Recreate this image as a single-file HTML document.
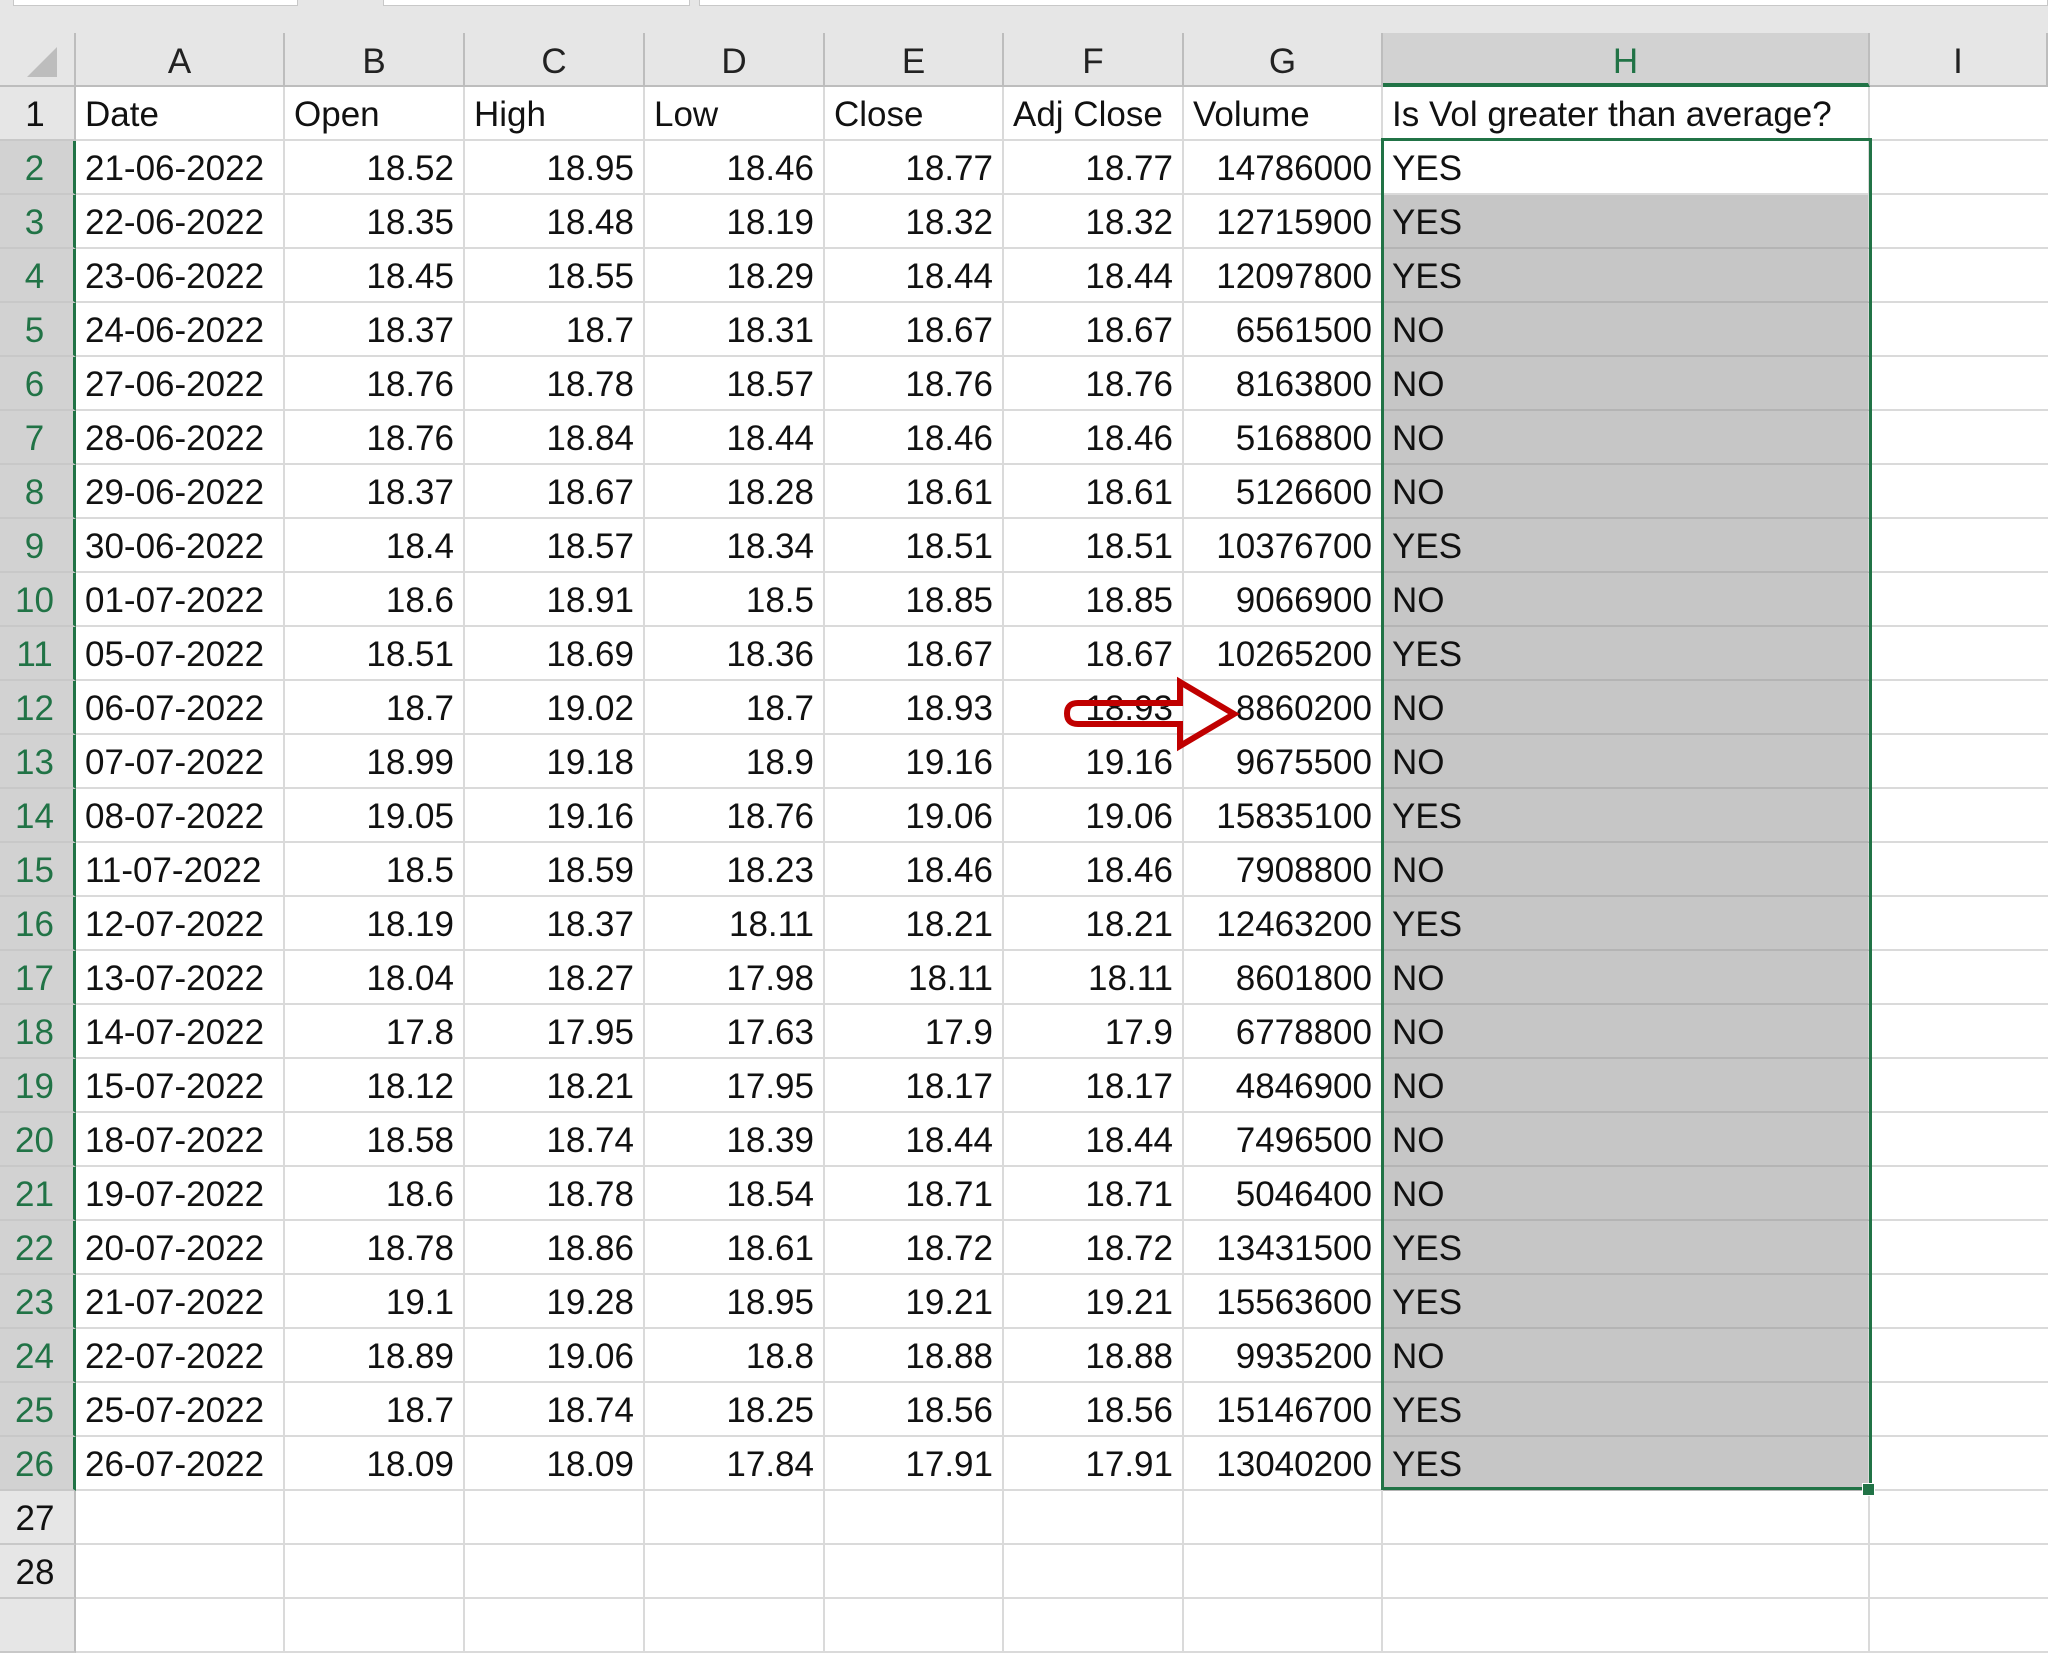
<!DOCTYPE html>
<html><head><meta charset="utf-8"><style>
*{margin:0;padding:0;box-sizing:border-box}
body{width:2048px;height:1609px;overflow:hidden;background:#fff;font-family:"Liberation Sans",Arial,sans-serif;font-size:35px;color:#111;position:relative}
.top{position:absolute;left:0;top:0;width:2048px;height:33px;background:#e6e6e6}
.box{position:absolute;top:0;height:6px;background:#fff;border:1px solid #c8c8c8;border-top:none}
.row{position:absolute;left:0;width:2048px;height:54px;display:flex}
.c{height:54px;border-right:2px solid #dadada;border-bottom:2px solid #dadada;line-height:56px;white-space:nowrap;overflow:hidden}
.h{width:76px;background:#e6e6e6;text-align:center;border-right:2px solid #bdbdbd;border-bottom:2px solid #c8c8c8;padding-right:4px}
.s{background:#d2d2d2;color:#217346;border-right:3px solid #217346}
.w1{width:209px}.w2{width:180px}.w3{width:180px}.w4{width:180px}.w5{width:179px}.w6{width:180px}.w7{width:199px}.w8{width:487px}.w9{width:178px;border-right:none}
.l{padding-left:9px}.r{text-align:right;padding-right:9px}
.g{background:#c6c6c6;border-bottom-color:#b4b4b4}
.ch .c{background:#e6e6e6;text-align:center;border-right:2px solid #bdbdbd;border-bottom:2px solid #bdbdbd;color:#222;line-height:58px}
.ch .h{border-right:2px solid #bdbdbd}
.ch .hs{background:#d2d2d2;color:#217346;border-bottom:4px solid #217346}
</style></head><body>
<div class="top">
<div class="box" style="left:13px;width:285px"></div>
<div class="box" style="left:383px;width:307px"></div>
<div class="box" style="left:699px;width:1349px"></div>
</div>
<div class="row ch" style="top:33px">
<div class="c h"><svg width="40" height="40" style="position:relative;top:10px;left:6px"><polygon points="36,4 36,34 6,34" fill="#bdbdbd"/></svg></div>
<div class="c w1">A</div><div class="c w2">B</div><div class="c w3">C</div><div class="c w4">D</div><div class="c w5">E</div><div class="c w6">F</div><div class="c w7">G</div><div class="c w8 hs">H</div><div class="c w9">I</div>
</div>
<div class="row" style="top:87px"><div class="c h">1</div><div class="c w1 l">Date</div><div class="c w2 l">Open</div><div class="c w3 l">High</div><div class="c w4 l">Low</div><div class="c w5 l">Close</div><div class="c w6 l">Adj Close</div><div class="c w7 l">Volume</div><div class="c w8 l">Is Vol greater than average?</div><div class="c w9"></div></div>
<div class="row" style="top:141px"><div class="c h s">2</div><div class="c w1 l">21-06-2022</div><div class="c w2 r">18.52</div><div class="c w3 r">18.95</div><div class="c w4 r">18.46</div><div class="c w5 r">18.77</div><div class="c w6 r">18.77</div><div class="c w7 r">14786000</div><div class="c w8 l">YES</div><div class="c w9"></div></div>
<div class="row" style="top:195px"><div class="c h s">3</div><div class="c w1 l">22-06-2022</div><div class="c w2 r">18.35</div><div class="c w3 r">18.48</div><div class="c w4 r">18.19</div><div class="c w5 r">18.32</div><div class="c w6 r">18.32</div><div class="c w7 r">12715900</div><div class="c w8 l g">YES</div><div class="c w9"></div></div>
<div class="row" style="top:249px"><div class="c h s">4</div><div class="c w1 l">23-06-2022</div><div class="c w2 r">18.45</div><div class="c w3 r">18.55</div><div class="c w4 r">18.29</div><div class="c w5 r">18.44</div><div class="c w6 r">18.44</div><div class="c w7 r">12097800</div><div class="c w8 l g">YES</div><div class="c w9"></div></div>
<div class="row" style="top:303px"><div class="c h s">5</div><div class="c w1 l">24-06-2022</div><div class="c w2 r">18.37</div><div class="c w3 r">18.7</div><div class="c w4 r">18.31</div><div class="c w5 r">18.67</div><div class="c w6 r">18.67</div><div class="c w7 r">6561500</div><div class="c w8 l g">NO</div><div class="c w9"></div></div>
<div class="row" style="top:357px"><div class="c h s">6</div><div class="c w1 l">27-06-2022</div><div class="c w2 r">18.76</div><div class="c w3 r">18.78</div><div class="c w4 r">18.57</div><div class="c w5 r">18.76</div><div class="c w6 r">18.76</div><div class="c w7 r">8163800</div><div class="c w8 l g">NO</div><div class="c w9"></div></div>
<div class="row" style="top:411px"><div class="c h s">7</div><div class="c w1 l">28-06-2022</div><div class="c w2 r">18.76</div><div class="c w3 r">18.84</div><div class="c w4 r">18.44</div><div class="c w5 r">18.46</div><div class="c w6 r">18.46</div><div class="c w7 r">5168800</div><div class="c w8 l g">NO</div><div class="c w9"></div></div>
<div class="row" style="top:465px"><div class="c h s">8</div><div class="c w1 l">29-06-2022</div><div class="c w2 r">18.37</div><div class="c w3 r">18.67</div><div class="c w4 r">18.28</div><div class="c w5 r">18.61</div><div class="c w6 r">18.61</div><div class="c w7 r">5126600</div><div class="c w8 l g">NO</div><div class="c w9"></div></div>
<div class="row" style="top:519px"><div class="c h s">9</div><div class="c w1 l">30-06-2022</div><div class="c w2 r">18.4</div><div class="c w3 r">18.57</div><div class="c w4 r">18.34</div><div class="c w5 r">18.51</div><div class="c w6 r">18.51</div><div class="c w7 r">10376700</div><div class="c w8 l g">YES</div><div class="c w9"></div></div>
<div class="row" style="top:573px"><div class="c h s">10</div><div class="c w1 l">01-07-2022</div><div class="c w2 r">18.6</div><div class="c w3 r">18.91</div><div class="c w4 r">18.5</div><div class="c w5 r">18.85</div><div class="c w6 r">18.85</div><div class="c w7 r">9066900</div><div class="c w8 l g">NO</div><div class="c w9"></div></div>
<div class="row" style="top:627px"><div class="c h s">11</div><div class="c w1 l">05-07-2022</div><div class="c w2 r">18.51</div><div class="c w3 r">18.69</div><div class="c w4 r">18.36</div><div class="c w5 r">18.67</div><div class="c w6 r">18.67</div><div class="c w7 r">10265200</div><div class="c w8 l g">YES</div><div class="c w9"></div></div>
<div class="row" style="top:681px"><div class="c h s">12</div><div class="c w1 l">06-07-2022</div><div class="c w2 r">18.7</div><div class="c w3 r">19.02</div><div class="c w4 r">18.7</div><div class="c w5 r">18.93</div><div class="c w6 r">18.93</div><div class="c w7 r">8860200</div><div class="c w8 l g">NO</div><div class="c w9"></div></div>
<div class="row" style="top:735px"><div class="c h s">13</div><div class="c w1 l">07-07-2022</div><div class="c w2 r">18.99</div><div class="c w3 r">19.18</div><div class="c w4 r">18.9</div><div class="c w5 r">19.16</div><div class="c w6 r">19.16</div><div class="c w7 r">9675500</div><div class="c w8 l g">NO</div><div class="c w9"></div></div>
<div class="row" style="top:789px"><div class="c h s">14</div><div class="c w1 l">08-07-2022</div><div class="c w2 r">19.05</div><div class="c w3 r">19.16</div><div class="c w4 r">18.76</div><div class="c w5 r">19.06</div><div class="c w6 r">19.06</div><div class="c w7 r">15835100</div><div class="c w8 l g">YES</div><div class="c w9"></div></div>
<div class="row" style="top:843px"><div class="c h s">15</div><div class="c w1 l">11-07-2022</div><div class="c w2 r">18.5</div><div class="c w3 r">18.59</div><div class="c w4 r">18.23</div><div class="c w5 r">18.46</div><div class="c w6 r">18.46</div><div class="c w7 r">7908800</div><div class="c w8 l g">NO</div><div class="c w9"></div></div>
<div class="row" style="top:897px"><div class="c h s">16</div><div class="c w1 l">12-07-2022</div><div class="c w2 r">18.19</div><div class="c w3 r">18.37</div><div class="c w4 r">18.11</div><div class="c w5 r">18.21</div><div class="c w6 r">18.21</div><div class="c w7 r">12463200</div><div class="c w8 l g">YES</div><div class="c w9"></div></div>
<div class="row" style="top:951px"><div class="c h s">17</div><div class="c w1 l">13-07-2022</div><div class="c w2 r">18.04</div><div class="c w3 r">18.27</div><div class="c w4 r">17.98</div><div class="c w5 r">18.11</div><div class="c w6 r">18.11</div><div class="c w7 r">8601800</div><div class="c w8 l g">NO</div><div class="c w9"></div></div>
<div class="row" style="top:1005px"><div class="c h s">18</div><div class="c w1 l">14-07-2022</div><div class="c w2 r">17.8</div><div class="c w3 r">17.95</div><div class="c w4 r">17.63</div><div class="c w5 r">17.9</div><div class="c w6 r">17.9</div><div class="c w7 r">6778800</div><div class="c w8 l g">NO</div><div class="c w9"></div></div>
<div class="row" style="top:1059px"><div class="c h s">19</div><div class="c w1 l">15-07-2022</div><div class="c w2 r">18.12</div><div class="c w3 r">18.21</div><div class="c w4 r">17.95</div><div class="c w5 r">18.17</div><div class="c w6 r">18.17</div><div class="c w7 r">4846900</div><div class="c w8 l g">NO</div><div class="c w9"></div></div>
<div class="row" style="top:1113px"><div class="c h s">20</div><div class="c w1 l">18-07-2022</div><div class="c w2 r">18.58</div><div class="c w3 r">18.74</div><div class="c w4 r">18.39</div><div class="c w5 r">18.44</div><div class="c w6 r">18.44</div><div class="c w7 r">7496500</div><div class="c w8 l g">NO</div><div class="c w9"></div></div>
<div class="row" style="top:1167px"><div class="c h s">21</div><div class="c w1 l">19-07-2022</div><div class="c w2 r">18.6</div><div class="c w3 r">18.78</div><div class="c w4 r">18.54</div><div class="c w5 r">18.71</div><div class="c w6 r">18.71</div><div class="c w7 r">5046400</div><div class="c w8 l g">NO</div><div class="c w9"></div></div>
<div class="row" style="top:1221px"><div class="c h s">22</div><div class="c w1 l">20-07-2022</div><div class="c w2 r">18.78</div><div class="c w3 r">18.86</div><div class="c w4 r">18.61</div><div class="c w5 r">18.72</div><div class="c w6 r">18.72</div><div class="c w7 r">13431500</div><div class="c w8 l g">YES</div><div class="c w9"></div></div>
<div class="row" style="top:1275px"><div class="c h s">23</div><div class="c w1 l">21-07-2022</div><div class="c w2 r">19.1</div><div class="c w3 r">19.28</div><div class="c w4 r">18.95</div><div class="c w5 r">19.21</div><div class="c w6 r">19.21</div><div class="c w7 r">15563600</div><div class="c w8 l g">YES</div><div class="c w9"></div></div>
<div class="row" style="top:1329px"><div class="c h s">24</div><div class="c w1 l">22-07-2022</div><div class="c w2 r">18.89</div><div class="c w3 r">19.06</div><div class="c w4 r">18.8</div><div class="c w5 r">18.88</div><div class="c w6 r">18.88</div><div class="c w7 r">9935200</div><div class="c w8 l g">NO</div><div class="c w9"></div></div>
<div class="row" style="top:1383px"><div class="c h s">25</div><div class="c w1 l">25-07-2022</div><div class="c w2 r">18.7</div><div class="c w3 r">18.74</div><div class="c w4 r">18.25</div><div class="c w5 r">18.56</div><div class="c w6 r">18.56</div><div class="c w7 r">15146700</div><div class="c w8 l g">YES</div><div class="c w9"></div></div>
<div class="row" style="top:1437px"><div class="c h s">26</div><div class="c w1 l">26-07-2022</div><div class="c w2 r">18.09</div><div class="c w3 r">18.09</div><div class="c w4 r">17.84</div><div class="c w5 r">17.91</div><div class="c w6 r">17.91</div><div class="c w7 r">13040200</div><div class="c w8 l g">YES</div><div class="c w9"></div></div>
<div class="row" style="top:1491px"><div class="c h">27</div><div class="c w1"></div><div class="c w2"></div><div class="c w3"></div><div class="c w4"></div><div class="c w5"></div><div class="c w6"></div><div class="c w7"></div><div class="c w8"></div><div class="c w9"></div></div>
<div class="row" style="top:1545px"><div class="c h">28</div><div class="c w1"></div><div class="c w2"></div><div class="c w3"></div><div class="c w4"></div><div class="c w5"></div><div class="c w6"></div><div class="c w7"></div><div class="c w8"></div><div class="c w9"></div></div>
<div class="row" style="top:1599px"><div class="c h"></div><div class="c w1"></div><div class="c w2"></div><div class="c w3"></div><div class="c w4"></div><div class="c w5"></div><div class="c w6"></div><div class="c w7"></div><div class="c w8"></div><div class="c w9"></div></div>
<div style="position:absolute;left:1381px;top:138px;width:491px;height:1352px;border:3px solid #217346"></div>
<div style="position:absolute;left:1862px;top:1483px;width:13px;height:13px;background:#217346;border:1px solid #fff"></div>
<svg style="position:absolute;left:0;top:0" width="2048" height="1609">
<path d="M1180,703 L1180,682 L1234,714 L1180,746 L1180,724 L1078,724 Q1067,724 1067,713.5 Q1067,703 1078,703 Z" fill="none" stroke="#c00000" stroke-width="6" stroke-linejoin="miter"/>
</svg>
</body></html>
